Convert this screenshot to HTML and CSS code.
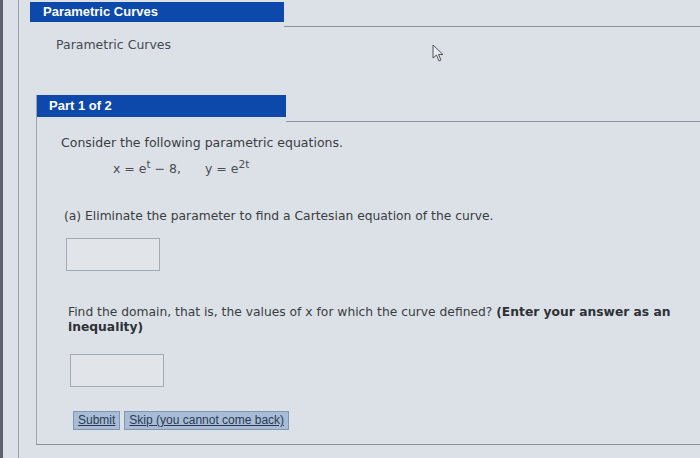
FILE: index.html
```html
<!DOCTYPE html>
<html>
<head>
<meta charset="utf-8">
<link rel="stylesheet" href="styles.css">
</head>
<body>
<div class="frame">
  <div class="tabrow">
    <div class="tab">Parametric Curves</div>
    <div class="tabline"></div>
  </div>
  <div class="subtitle">Parametric Curves</div>
  <svg class="cursor" width="14" height="20" viewBox="0 0 14 20"><path d="M1 1 L1 14 L4.5 11 L7 17 L9 16 L6.5 10.5 L11 10.5 Z" fill="#e8ecf0" stroke="#555" stroke-width="1" stroke-linejoin="round"/></svg>
  <div class="part">
    <div class="tabrow">
      <div class="tab tab-part">Part 1 of 2</div>
      <div class="tabline"></div>
    </div>
    <div class="content">
      <p class="intro">Consider the following parametric equations.</p>
      <p class="eq">x = e<sup>t</sup> − 8,<span class="gap"></span>y = e<sup>2t</sup></p>
      <p class="qa">(a) Eliminate the parameter to find a Cartesian equation of the curve.</p>
      <div class="answer"></div>
      <p class="qb">Find the domain, that is, the values of x for which the curve defined? <b>(Enter your answer as an inequality)</b></p>
      <div class="answer answer-b"></div>
      <div class="buttons">
        <span class="btn">Submit</span>
        <span class="btn">Skip (you cannot come back)</span>
      </div>
    </div>
  </div>
</div>
</body>
</html>
```

FILE: styles.css
```css
html, body {
  margin: 0;
  height: 100%;
}
body {
  background: #dce1e7;
  border-left: 3px solid #5b6270;
  box-sizing: border-box;
  font-family: "DejaVu Sans", Verdana, sans-serif;
  color: #3a3d42;
  overflow: hidden;
}
.frame {
  position: relative;
  margin-left: 15px;
  border-left: 1px solid #9ba2ac;
  height: 458px;
  padding-top: 2px;
  box-sizing: border-box;
}
.tabrow {
  display: flex;
  align-items: flex-end;
}
.tab {
  margin-left: 11px;
  width: 241px;
  height: 20px;
  background: #0c49ab;
  color: #fff;
  font-family: "Liberation Sans", Arial, sans-serif;
  font-weight: bold;
  font-size: 13px;
  line-height: 20px;
  padding-left: 13px;
}
.tabline {
  flex: 1;
  border-bottom: 1px solid #8a929d;
  margin-bottom: -5px;
}
.subtitle {
  margin: 15px 0 0 37px;
  font-size: 12.5px;
  color: #454a52;
}
.cursor {
  position: absolute;
  left: 413px;
  top: 44px;
}
.part {
  margin: 43px 0 0 17px;
  border-left: 1px solid #9ba2ac;
  border-bottom: 1px solid #8a929d;
  height: 349px;
}
.tab-part {
  margin-left: 0;
  width: 237px;
  height: 22px;
  line-height: 22px;
  padding-left: 12px;
}
.content {
  padding: 18px 0 0 24px;
}
p {
  margin: 0;
}
.intro {
  font-size: 12.5px;
  color: #3a3d42;
}
.eq {
  margin: 8px 0 0 52px;
  font-size: 12.5px;
  color: #4a4e55;
}
.eq sup {
  font-size: 10.5px;
}
.gap {
  display: inline-block;
  width: 24px;
}
.qa {
  margin: 33px 0 0 3px;
  font-size: 12.3px;
}
.answer {
  margin: 15px 0 0 5px;
  width: 92px;
  height: 31px;
  border: 1px solid #a3aab3;
  background: #e1e5ea;
}
.qb {
  margin: 34px 20px 0 7px;
  font-size: 12.3px;
  line-height: 15px;
}
.qb b {
  color: #2e3136;
}
.answer-b {
  margin: 19px 0 0 9px;
}
.buttons {
  display: flex;
  gap: 4px;
  margin: 24px 0 0 12px;
}
.btn {
  background: #a8bdd5;
  border: 1px solid #7f97b2;
  font-family: "Liberation Sans", Arial, sans-serif;
  font-size: 12px;
  color: #2a3a55;
  text-decoration: underline;
  padding: 1px 4px;
  line-height: 15px;
}
```
